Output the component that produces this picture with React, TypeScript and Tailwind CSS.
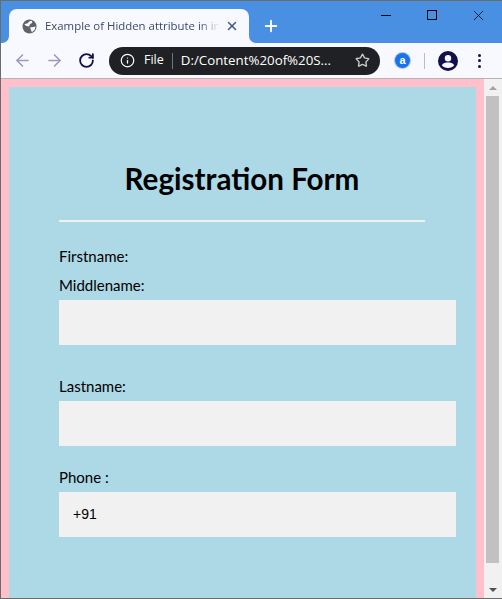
import { X, Plus, ArrowLeft, ArrowRight, RotateCw, Info, Star } from 'lucide-react'

function Field({ label, value, labelClass }: { label: string; value?: string; labelClass: string }) {
  return (
    <div>
      <div className={'text-[15px] leading-[18px] text-black ' + labelClass}>{label}</div>
      <div className="h-[45px] w-[397px] bg-[#f1f1f1] pl-[14px] flex items-center font-['Liberation_Sans',sans-serif] text-[14px] text-black">
        {value}
      </div>
    </div>
  )
}

export default function App() {
  return (
    <div className="h-[599px] w-[502px] overflow-hidden flex flex-col bg-[#4a90e2] border border-[#6b6b6b] border-r-0 font-['Lato',sans-serif]">
      {/* title bar */}
      <div className="h-[42px] shrink-0 flex items-end relative">
        <div className="ml-[8px] h-[34px] w-[240px] bg-[#f8f9ff] rounded-t-[8px] flex items-center pl-[13px] pr-[10px] relative">
          {/* tab foot curves */}
          <div className="absolute bottom-0 -left-[7px] size-[7px] bg-[#f8f9ff]">
            <div className="size-full bg-[#4a90e2] rounded-br-[7px]" />
          </div>
          <div className="absolute bottom-0 -right-[7px] size-[7px] bg-[#f8f9ff]">
            <div className="size-full bg-[#4a90e2] rounded-bl-[7px]" />
          </div>
          <svg width="15" height="15" viewBox="0 0 16 16" className="shrink-0">
            <circle cx="8" cy="8" r="7.5" fill="#5f6368" />
            <path d="M2.5 5.5 6 4.5 8 2.5 10.5 1.8 11 4 8.5 5.5 7.5 8 4.5 7.5Z" fill="#f8f9ff" />
            <path d="M8.5 9 12 8.5 14.5 8 13.5 11.5 10.5 14 9.5 11.5Z" fill="#f8f9ff" />
          </svg>
          <span className="ml-[8px] w-[180px] overflow-hidden whitespace-nowrap text-[11.4px] text-[#3c4a66] font-['Open_Sans',sans-serif] [mask-image:linear-gradient(to_right,black_86%,transparent_97%)]">
            Example of Hidden attribute in in
          </span>
          <X size={14} strokeWidth={2.5} className="ml-auto text-[#3c5a80] shrink-0" />
        </div>
        <Plus size={18} strokeWidth={2.5} className="ml-[13px] mb-[8px] text-white" />
        <div className="absolute top-[1px] right-[1px] flex items-center text-black">
          <span className="w-[46px] h-[26px] flex items-center justify-center">
            <span className="w-[10px] h-px bg-black" />
          </span>
          <span className="w-[46px] h-[26px] flex items-center justify-center">
            <span className="size-[10px] border border-black" />
          </span>
          <span className="w-[46px] h-[26px] flex items-center justify-center">
            <X size={17} strokeWidth={1.1} />
          </span>
        </div>
      </div>

      {/* toolbar */}
      <div className="h-[36px] shrink-0 bg-[#f8f9ff] border-b border-[#b4b4b4] flex items-center pl-[12px]">
        <ArrowLeft size={19} strokeWidth={2} className="text-[#9c99bd]" />
        <ArrowRight size={19} strokeWidth={2} className="ml-[13px] text-[#9c99bd]" />
        <RotateCw size={17} strokeWidth={2.6} className="ml-[14px] text-[#14104a]" />
        <div className="ml-[14px] h-[28px] w-[271px] rounded-full bg-[#202124] flex items-center pl-[11px] pr-[10px] text-white font-['Open_Sans',sans-serif] text-[12.5px]">
          <Info size={15} strokeWidth={2} />
          <span className="ml-[9px]">File</span>
          <span className="ml-[8px] h-[16px] w-px bg-[#70757a]" />
          <span className="ml-[8px] whitespace-nowrap text-[13.3px]">D:/Content%20of%20S...</span>
          <Star size={15} strokeWidth={2.2} className="ml-auto text-[#c8c8c8]" />
        </div>
        <div className="ml-[15px] h-[15px] w-[15px] rounded-full bg-[#1a73e8] ring-1 ring-[#a5c8f5] flex items-center justify-center text-white text-[11px] font-bold leading-none font-['Liberation_Sans',sans-serif]">
          a
        </div>
        <span className="ml-[14px] h-[16px] w-px bg-[#b8bccb]" />
        <svg width="20" height="20" viewBox="0 0 20 20" className="ml-[13px] shrink-0">
          <circle cx="10" cy="10" r="10" fill="#14104a" />
          <circle cx="10" cy="7.2" r="3.2" fill="#f8f9ff" />
          <path d="M3.8 14.2C5 12 7.8 11.6 10 11.6S15 12 16.2 14.2C14.8 16 12.6 17 10 17S5.2 16 3.8 14.2Z" fill="#f8f9ff" />
        </svg>
        <div className="ml-[20px] flex flex-col gap-[2.5px]">
          <span className="size-[3px] rounded-full bg-[#14104a]" />
          <span className="size-[3px] rounded-full bg-[#14104a]" />
          <span className="size-[3px] rounded-full bg-[#14104a]" />
        </div>
      </div>

      {/* page */}
      <div className="flex-1 min-h-0 flex bg-[#ffc0cb]">
        <div className="flex-1 min-w-0 pt-[8px] px-[8px]">
          <div className="h-full bg-[#add8e6] pl-[50px]">
            <div className="w-[366px] pt-[74px]">
              <h1 className="text-center text-[29.6px] leading-[36px] font-bold text-black">Registration Form</h1>
              <div className="mt-[23px] h-[2px] bg-[#f1f1f1]" />
            </div>
            <div className="mt-[25px] text-[15px] leading-[18px] text-black">Firstname:</div>
            <Field label="Middlename:" labelClass="mt-[11px] mb-[6px]" />
            <Field label="Lastname:" labelClass="mt-[32px] mb-[6px]" />
            <Field label="Phone :" value="+91" labelClass="mt-[22px] mb-[6px]" />
          </div>
        </div>

        {/* scrollbar */}
        <div className="w-[18px] shrink-0 bg-[#f1f1f1] flex flex-col">
          <div className="h-[17px] flex items-center justify-center">
            <div className="border-x-[4px] border-x-transparent border-b-[4px] border-b-[#a3a3a3]" />
          </div>
          <div className="ml-[2px] w-[13px] h-[467px] bg-[#c1c1c1]" />
          <div className="mt-auto h-[17px] flex items-center justify-center">
            <div className="border-x-[4px] border-x-transparent border-t-[4px] border-t-[#505050]" />
          </div>
        </div>
      </div>
    </div>
  )
}
